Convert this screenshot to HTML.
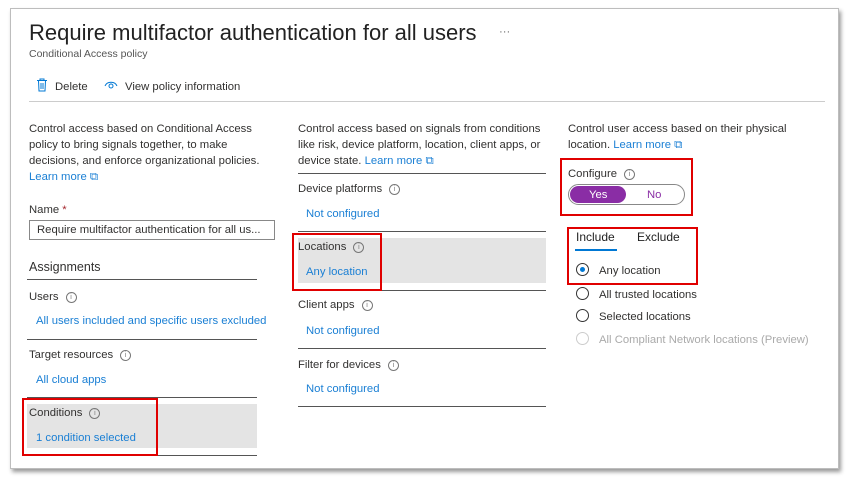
<!DOCTYPE html>
<html><head><meta charset="utf-8"><style>
body{margin:0;width:850px;height:482px;background:#fff;font-family:"Liberation Sans",sans-serif;color:#323130;position:relative;overflow:hidden}
.p{position:absolute}
.frame{left:10px;top:8px;width:827px;height:459px;background:#fff;border:1px solid #bdbdbd;box-shadow:2px 3px 4px #9a9a9a}
.t{position:absolute;font-size:11.3px;white-space:nowrap;line-height:16px}
.l{color:#1a7fd4}
.line{position:absolute;height:1px;background:#555}
.gray{position:absolute;background:#e4e4e4}
.red{position:absolute;border:2px solid #e00000;box-sizing:border-box}
.i{display:inline-block;width:9px;height:9px;border:1px solid #777;border-radius:50%;font-size:7px;line-height:9px;text-align:center;color:#777;margin-left:7px;vertical-align:1px}
.rad{position:absolute;width:13px;height:13px;border:1px solid #333;border-radius:50%;box-sizing:border-box}
</style></head><body>
<div class="p frame"></div>
<div class="t" style="left:29px;top:19px;font-size:22px;line-height:28px;color:#222">Require multifactor authentication for all users</div>
<div class="t" style="left:499px;top:24px;color:#666">···</div>
<div class="t" style="left:29px;top:46px;font-size:10.5px;color:#555">Conditional Access policy</div>
<svg class="p" style="left:36px;top:78px" width="12" height="14" viewBox="0 0 12 14"><path d="M1 2.5h10M4 2.5V1h4v1.5M2.5 2.5l.5 10.5h6l.5-10.5M5 5v6M7 5v6" fill="none" stroke="#0078d4" stroke-width="1"/></svg>
<div class="t" style="left:55px;top:79px">Delete</div>
<svg class="p" style="left:104px;top:80px" width="14" height="10" viewBox="0 0 14 10"><path d="M1 6C3 1 11 1 13 6" fill="none" stroke="#0078d4"/><circle cx="7" cy="6" r="2" fill="none" stroke="#0078d4"/></svg>
<div class="t" style="left:125px;top:79px">View policy information</div>
<div class="line" style="left:29px;top:101px;width:796px;background:#ccc"></div>

<div class="t" style="left:29px;top:121px;line-height:16px">Control access based on Conditional Access<br>policy to bring signals together, to make<br>decisions, and enforce organizational policies.<br><span class="l">Learn more ⧉</span></div>
<div class="t" style="left:29px;top:202px">Name <span style="color:#a4262c">*</span></div>
<div class="p" style="left:29px;top:220px;width:246px;height:20px;border:1px solid #888;box-sizing:border-box"></div>
<div class="t" style="left:37px;top:222px">Require multifactor authentication for all us...</div>
<div class="t" style="left:29px;top:259px;font-size:12.5px">Assignments</div>
<div class="line" style="left:27px;top:279px;width:230px"></div>
<div class="t" style="left:29px;top:289px">Users<span class="i">i</span></div>
<div class="t l" style="left:36px;top:313px">All users included and specific users excluded</div>
<div class="line" style="left:27px;top:339px;width:230px"></div>
<div class="t" style="left:29px;top:347px">Target resources<span class="i">i</span></div>
<div class="t l" style="left:36px;top:372px">All cloud apps</div>
<div class="line" style="left:27px;top:397px;width:230px"></div>
<div class="gray" style="left:27px;top:404px;width:230px;height:44px"></div>
<div class="t" style="left:29px;top:405px">Conditions<span class="i">i</span></div>
<div class="t l" style="left:36px;top:430px">1 condition selected</div>
<div class="line" style="left:27px;top:455px;width:230px"></div>
<div class="red" style="left:22px;top:398px;width:136px;height:58px"></div>

<div class="t" style="left:298px;top:121px">Control access based on signals from conditions<br>like risk, device platform, location, client apps, or<br>device state. <span class="l">Learn more ⧉</span></div>
<div class="line" style="left:298px;top:173px;width:248px"></div>
<div class="t" style="left:298px;top:181px">Device platforms<span class="i">i</span></div>
<div class="t l" style="left:306px;top:206px">Not configured</div>
<div class="line" style="left:298px;top:231px;width:248px"></div>
<div class="gray" style="left:298px;top:238px;width:248px;height:45px"></div>
<div class="t" style="left:298px;top:239px">Locations<span class="i">i</span></div>
<div class="t l" style="left:306px;top:264px">Any location</div>
<div class="line" style="left:298px;top:290px;width:248px"></div>
<div class="red" style="left:292px;top:233px;width:90px;height:58px"></div>
<div class="t" style="left:298px;top:297px">Client apps<span class="i">i</span></div>
<div class="t l" style="left:306px;top:323px">Not configured</div>
<div class="line" style="left:298px;top:348px;width:248px"></div>
<div class="t" style="left:298px;top:357px">Filter for devices<span class="i">i</span></div>
<div class="t l" style="left:306px;top:381px">Not configured</div>
<div class="line" style="left:298px;top:406px;width:248px"></div>

<div class="t" style="left:568px;top:121px">Control user access based on their physical<br>location. <span class="l">Learn more ⧉</span></div>
<div class="red" style="left:560px;top:158px;width:133px;height:58px"></div>
<div class="t" style="left:568px;top:166px">Configure<span class="i">i</span></div>
<div class="p" style="left:568px;top:184px;width:117px;height:21px;border:1px solid #888;border-radius:11px;box-sizing:border-box"></div>
<div class="p" style="left:570px;top:186px;width:56px;height:17px;background:#8a2da5;border-radius:9px"></div>
<div class="t" style="left:589px;top:187px;color:#fff">Yes</div>
<div class="t" style="left:647px;top:187px;color:#8a2da5">No</div>
<div class="red" style="left:567px;top:227px;width:131px;height:58px"></div>
<div class="t" style="left:576px;top:229px;font-size:12px;color:#222">Include</div>
<div class="p" style="left:575px;top:249px;width:42px;height:2px;background:#0078d4"></div>
<div class="t" style="left:637px;top:229px;font-size:12px;color:#222">Exclude</div>
<div class="rad" style="left:576px;top:263px"></div><div class="p" style="left:580px;top:267px;width:5px;height:5px;border-radius:50%;background:#0078d4"></div>
<div class="t" style="left:599px;top:263px">Any location</div>
<div class="rad" style="left:576px;top:287px"></div>
<div class="t" style="left:599px;top:287px">All trusted locations</div>
<div class="rad" style="left:576px;top:309px"></div>
<div class="t" style="left:599px;top:309px">Selected locations</div>
<div class="rad" style="left:576px;top:332px;border-color:#ccc"></div>
<div class="t" style="left:599px;top:332px;color:#aaa">All Compliant Network locations (Preview)</div>
</body></html>
